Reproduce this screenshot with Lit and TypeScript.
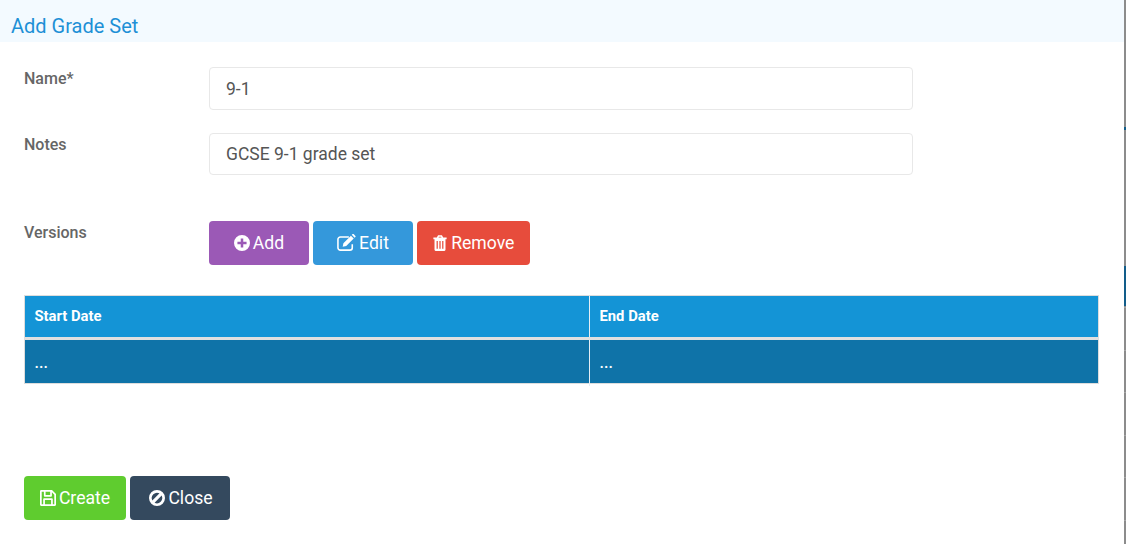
import { LitElement, html, css, svg } from "lit";
import { customElement } from "lit/decorators.js";

const plus = svg`<path fill-rule="evenodd" d="M7 0a7 7 0 1 1 0 14A7 7 0 0 1 7 0zM5.900 3v2.900H3v2.200h2.900V11h2.200V8.100H11V5.900H8.100V3z"/>`;
const edit = svg`<path fill="none" stroke="currentColor" stroke-width="1.3" d="M12.500 8.500v2.800a2 2 0 0 1-2 2H2.700a2 2 0 0 1-2-2V4.500a2 2 0 0 1 2-2h7"/><path d="M5.200 7.600 11.400 1.400l2.300 2.300-6.200 6.200-2.900.6zM12.100.7l.7-.6a.6.6 0 0 1 .8 0l1.500 1.500a.6.6 0 0 1 0 .8l-.7.7z"/>`;
const trash = svg`<path fill-rule="evenodd" d="M4.200 2.200 5.300.3h3.400l1.100 1.900h3v1.500h-1V13a1 1 0 0 1-1 1H3.200a1 1 0 0 1-1-1V3.700h-1V2.200zm1.500 0h2.600l-.4-.7H6.100zM4 5.200v6.900h1.100V5.200zm2.450 0v6.900h1.100V5.200zm2.450 0v6.900H10V5.200z"/>`;
const save = svg`<path fill-rule="evenodd" d="M1.500.5H11l3.500 3.500v9.500a1 1 0 0 1-1 1h-12a1 1 0 0 1-1-1v-12a1 1 0 0 1 1-1zM2 2v11h1.300V8.500a.8.800 0 0 1 .8-.8h6.800a.8.800 0 0 1 .8.800V13H13V4.600L10.900 2.500v3a.8.800 0 0 1-.8.8H4.700a.8.800 0 0 1-.8-.8V2zm2.800 7.200V13h5.400V9.200zM5.400 2v2.800h4V2z"/>`;
const ban = svg`<path fill-rule="evenodd" d="M7.500.5a7 7 0 1 1 0 14 7 7 0 0 1 0-14zM3.400 9.700l6.300-6.300a4.700 4.700 0 0 0-6.300 6.300zm2 2 6.200-6.300a4.700 4.700 0 0 1-6.200 6.300z"/>`;

const icon = (p: unknown, vb: string, w: number, h: number) =>
  html`<svg class="ic" viewBox=${vb} width=${w} height=${h} fill="currentColor">${p}</svg>`;

@customElement("app-root")
export class AppRoot extends LitElement {
  static styles = css`
    :host {
      display: block;
      width: 1126px;
      height: 544px;
      overflow: hidden;
      background: #fff;
      font-family: Roboto, "Liberation Sans", sans-serif;
      position: relative;
    }
    .head {
      height: 42px;
      box-sizing: border-box;
      background: #f3faff;
      color: #1e90d6;
      font-size: 20px;
      line-height: 24px;
      padding: 14px 0 0 11px;
      margin-right: 2px;
    }
    .body {
      padding: 25px 27px 0 24px;
    }
    .row {
      display: grid;
      grid-template-columns: 185px 704px;
      height: 42px;
    }
    .row.first {
      height: 43px;
    }
    .row + .row {
      margin-top: 23px;
    }
    label, .lbl {
      font-size: 16px;
      font-weight: 500;
      color: #666;
      line-height: 24px;
    }
    .input {
      box-sizing: border-box;
      border: 1px solid #e8e8e8;
      border-radius: 4px;
      padding: 0 16px;
      font-size: 17.5px;
      color: #555;
      line-height: 40px;
      height: 42px;
    }
    .first .input {
      height: 43px;
      line-height: 42px;
    }
    .versions {
      display: grid;
      grid-template-columns: 185px auto;
      margin-top: 46px;
    }
    .btns {
      display: flex;
      gap: 4px;
    }
    .btn {
      box-sizing: border-box;
      height: 44px;
      padding-bottom: 1px;
      border-radius: 4px;
      color: #fff;
      font-size: 17.6px;
      display: flex;
      align-items: center;
      justify-content: center;
      gap: 3px;
    }
    .ic { flex: none; }
    .add { width: 100px; background: #9b59b6; }
    .edit { width: 100px; background: #3498db; }
    .remove { width: 113px; background: #e74c3c; gap: 4.5px; }
    .create { width: 102px; background: #5fcc2f; }
    .close { width: 100px; background: #34495e; padding-left: 2px; }
    .table {
      margin-top: 30px;
      width: 1075px;
      box-sizing: border-box;
      border: 1px solid #ddd;
      color: #fff;
    }
    .tr {
      display: grid;
      grid-template-columns: 564px 1fr;
    }
    .tr > div { padding-left: 9.5px; }
    .tr > div + div { border-left: 1px solid #e4eef5; }
    .thr { background: #1494d6; height: 41px; border-bottom: 3px solid #e0e0e0; }
    .thr > div { font-weight: 700; font-size: 14.8px; line-height: 41px; }
    .tbr { background: #0f73a8; height: 43px; }
    .tbr > div { line-height: 46px; font-size: 16px; font-weight: 500; }
    .footer {
      display: flex;
      gap: 4px;
      margin-top: 92px;
    }
    .edge {
      position: absolute;
      top: 0;
      right: 0;
      width: 2px;
      height: 544px;
      background: #8c8c8c;
    }
    .m1, .m2, .tick { position: absolute; left: 0; width: 2px; }
    .m1 { top: 127px; height: 3px; background: #125d8a; }
    .m2 { top: 266px; height: 40px; background: #125d8a; }
    .tick { height: 1px; background: #a4a4a4; }
  `;

  render() {
    return html`
      <div class="head">Add Grade Set</div>
      <div class="body">
        <div class="row first"><label>Name*</label><div class="input">9-1</div></div>
        <div class="row"><label>Notes</label><div class="input">GCSE 9-1 grade set</div></div>
        <div class="versions">
          <div class="lbl">Versions</div>
          <div class="btns">
            <div class="btn add">${icon(plus, "0 0 14 14", 16, 16)}Add</div>
            <div class="btn edit">${icon(edit, "0 0 15.5 14", 19, 17)}Edit</div>
            <div class="btn remove">${icon(trash, "1 0 12 14", 14, 16)}Remove</div>
          </div>
        </div>
        <div class="table">
          <div class="tr thr"><div>Start Date</div><div>End Date</div></div>
          <div class="tr tbr"><div>...</div><div>...</div></div>
        </div>
        <div class="footer">
          <div class="btn create">${icon(save, "0.5 0.5 14 14", 16, 16)}Create</div>
          <div class="btn close">${icon(ban, "0.5 0.5 14 14", 16, 16)}Close</div>
        </div>
      </div>
      <div class="edge">
        <div class="m1"></div>
        <div class="m2"></div>
        ${[307, 350, 392, 435, 477, 520].map(
          (y) => html`<div class="tick" style="top:${y}px"></div>`
        )}
      </div>
    `;
  }
}
